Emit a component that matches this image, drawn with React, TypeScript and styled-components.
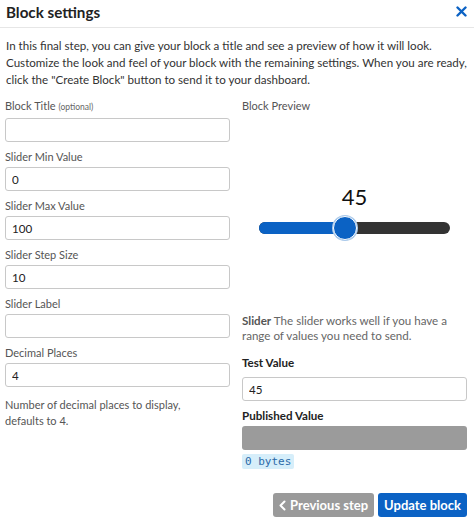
import styled, { createGlobalStyle } from 'styled-components';

const GlobalStyle = createGlobalStyle`
  body {
    margin: 0;
    background: #fff;
    font-family: Lato, 'Open Sans', sans-serif;
    color: #333;
  }
  * {
    box-sizing: border-box;
  }
`;

const Modal = styled.div`
  width: 474px;
  height: 525px;
  background: #fff;
`;

const Header = styled.div`
  display: flex;
  align-items: center;
  justify-content: space-between;
  height: 28px;
  padding: 0 7px 4px 6px;
  border-bottom: 1px solid #e6e6e6;
`;

const Title = styled.h2`
  margin: 0;
  font-size: 15.2px;
  line-height: 18px;
  font-weight: 700;
  color: #222;
`;

const CloseButton = styled.button`
  display: flex;
  padding: 0;
  border: 0;
  background: none;
  cursor: pointer;
`;

const Intro = styled.p`
  margin: 0;
  padding: 9px 6px 0;
  font-size: 11.6px;
  line-height: 17px;
  color: #333;
`;

const Columns = styled.div`
  display: grid;
  grid-template-columns: 225px 225px;
  column-gap: 12px;
  padding: 8px 7px 0 5px;
`;

const Column = styled.div`
  display: flex;
  flex-direction: column;
`;

const Label = styled.label<{ $strong?: boolean; $gap?: number }>`
  display: block;
  padding-top: 1px;
  font-size: ${(p) => (p.$strong ? '11.6px' : '11px')};
  line-height: 17px;
  font-weight: ${(p) => (p.$strong ? 700 : 400)};
  color: ${(p) => (p.$strong ? '#222' : '#555')};
  margin-bottom: ${(p) => p.$gap ?? 2}px;
`;

const Optional = styled.span`
  font-size: 8.5px;
  color: #666;
`;

const Input = styled.input`
  display: block;
  width: 100%;
  height: 24px;
  margin: 0 0 5px;
  padding: 0 6px;
  border: 1px solid #c8c8c8;
  border-radius: 3px;
  font-family: inherit;
  font-size: 11.6px;
  color: #222;
  outline: none;
`;

const Help = styled.p`
  max-width: 185px;
  margin: 5px 0 0;
  font-size: 11px;
  line-height: 16px;
  color: #555;
`;

const Preview = styled.div`
  display: flex;
  flex-direction: column;
  align-items: center;
  padding: 68px 17px 73px;
`;

const PreviewValue = styled.div`
  font-size: 22px;
  line-height: 26px;
  color: #111;
  margin-bottom: 6px;
`;

const Track = styled.div`
  position: relative;
  width: 100%;
  height: 24px;
  display: flex;
  align-items: center;
`;

const Rail = styled.div`
  width: 100%;
  height: 12px;
  border-radius: 6px;
  background: #333;
  overflow: hidden;
`;

const Fill = styled.div`
  height: 100%;
  background: #0b62c4;
`;

const Thumb = styled.div`
  position: absolute;
  top: 0;
  width: 24px;
  height: 24px;
  margin-left: -12px;
  border-radius: 50%;
  background: #0b62c4;
  border: 1.5px solid #fff;
  box-shadow: 0 0 0 1px #a9c9ea;
`;

const Description = styled.p`
  margin: 0 0 10px;
  font-size: 11.6px;
  line-height: 15px;
  color: #666;

  b {
    color: #555;
  }
`;

const Published = styled.div`
  height: 24px;
  margin-bottom: 4px;
  border-radius: 3px;
  background: #9b9b9b;
`;

const Bytes = styled.div`
  align-self: flex-start;
  padding: 0 3px;
  height: 15px;
  line-height: 15px;
  border-radius: 2px;
  background: #d6eefa;
  color: #2b6aa8;
  font-family: 'DejaVu Sans Mono', 'Liberation Mono', monospace;
  font-size: 11px;
`;

const Footer = styled.div`
  display: flex;
  justify-content: flex-end;
  gap: 4px;
  padding: 24px 7px 0 0;
`;

const Button = styled.button<{ $variant: 'primary' | 'secondary' }>`
  display: flex;
  align-items: center;
  gap: 4px;
  height: 24px;
  padding: 0 6px;
  border: 0;
  border-radius: 3px;
  background: ${(p) => (p.$variant === 'primary' ? '#0b62c4' : '#9a9a9a')};
  color: #fff;
  font-family: inherit;
  font-size: 13px;
  font-weight: 700;
  cursor: pointer;
`;

const fields = [
  { label: 'Slider Min Value', value: '0' },
  { label: 'Slider Max Value', value: '100' },
  { label: 'Slider Step Size', value: '10' },
  { label: 'Slider Label', value: '' },
  { label: 'Decimal Places', value: '4' },
];

export default function App() {
  const min = 0;
  const max = 100;
  const value = 45;
  const pct = ((value - min) / (max - min)) * 100;

  return (
    <Modal>
      <GlobalStyle />
      <Header>
        <Title>Block settings</Title>
        <CloseButton aria-label='Close'>
          <svg width='11' height='11' viewBox='0 0 11 11'>
            <path d='M1.5 1.5l8 8M9.5 1.5l-8 8' stroke='#0b62c4' strokeWidth='2.4' strokeLinecap='round' />
          </svg>
        </CloseButton>
      </Header>
      <Intro>
        In this final step, you can give your block a title and see a preview of how it will look.
        Customize the look and feel of your block with the remaining settings. When you are ready,
        click the "Create Block" button to send it to your dashboard.
      </Intro>
      <Columns>
        <Column>
          <Label>
            Block Title <Optional>(optional)</Optional>
          </Label>
          <Input defaultValue='' />
          {fields.map((f) => (
            <div key={f.label}>
              <Label>{f.label}</Label>
              <Input defaultValue={f.value} />
            </div>
          ))}
          <Help>Number of decimal places to display, defaults to 4.</Help>
        </Column>
        <Column>
          <Label>Block Preview</Label>
          <Preview>
            <PreviewValue>{value}</PreviewValue>
            <Track>
              <Rail>
                <Fill style={{ width: `${pct}%` }} />
              </Rail>
              <Thumb style={{ left: `${pct}%` }} />
            </Track>
          </Preview>
          <Description>
            <b>Slider</b> The slider works well if you have a range of values you need to send.
          </Description>
          <Label $strong $gap={6}>Test Value</Label>
          <Input defaultValue='45' />
          <Label $strong>Published Value</Label>
          <Published />
          <Bytes>0 bytes</Bytes>
        </Column>
      </Columns>
      <Footer>
        <Button $variant='secondary'>
          <svg width='7' height='11' viewBox='0 0 7 11'>
            <path d='M5.5 1.5L1.5 5.5l4 4' stroke='#fff' strokeWidth='2' fill='none' strokeLinecap='round' strokeLinejoin='round' />
          </svg>
          Previous step
        </Button>
        <Button $variant='primary'>Update block</Button>
      </Footer>
    </Modal>
  );
}
